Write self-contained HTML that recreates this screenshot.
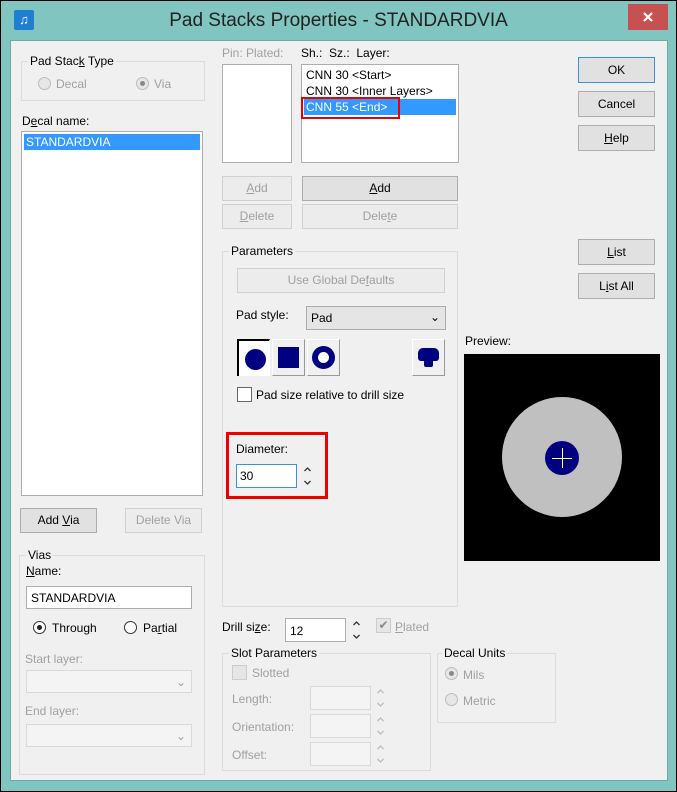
<!DOCTYPE html>
<html><head><style>
*{box-sizing:border-box;margin:0;padding:0}
body{width:677px;height:792px;background:#000;position:relative;overflow:hidden;font-family:"Liberation Sans",sans-serif;font-size:12px;color:#000}
.a{position:absolute}
.frame{left:1px;top:1px;width:675px;height:790px;background:#80c5bf}
.client{left:10px;top:40px;width:658px;height:741px;background:#f0f0f0;border:1px solid #6aa9a4}
.btn{position:absolute;background:#e1e1e1;border:1px solid #adadad;text-align:center;line-height:22px}
.dis{color:#a0a0a0;border-color:#d0d0d0;background:#ececec}
.grp{position:absolute;border:1px solid #dcdcdc}
.gl{position:absolute;background:#f0f0f0;padding:0 2px;top:-8px;left:6px}
.box{position:absolute;background:#fff;border:1px solid #abadb3}
.g{color:#a0a0a0}
.rad{position:absolute;width:13px;height:13px;border-radius:50%;border:1px solid #333;background:#fff}
.rad.d{border-color:#bcbcbc;background:#e6e6e6}
.dot{position:absolute;left:3px;top:3px;width:5px;height:5px;border-radius:50%;background:#222}
.cb{position:absolute;width:13px;height:13px;border:1px solid #333;background:#fff}
.sb{position:absolute;background:#f4f4f4;border:1px solid #d9d9d9}
.sp{position:absolute;width:9px;height:22px}
</style></head><body>
<svg width="0" height="0" style="position:absolute"><defs>
<symbol id="spin" viewBox="0 0 9 22"><path d="M1.5 6 L4.5 3 L7.5 6 M1.5 16 L4.5 19 L7.5 16" fill="none" stroke="currentColor" stroke-width="1.3"/></symbol>
</defs></svg>
<div class="a frame"></div>
<div class="a" style="left:14px;top:10px;width:20px;height:20px;background:#1e7fd0;border-radius:2px;color:#fff;font-size:13px;text-align:center;line-height:20px">♫</div>
<div class="a" style="left:0;width:677px;top:10px;text-align:center;font-size:19px;color:#222">Pad Stacks Properties - STANDARDVIA</div>
<div class="a" style="left:628px;top:4px;width:40px;height:26px;background:#c75050"><svg width="40" height="26"><path d="M16 9 L24 17 M24 9 L16 17" stroke="#fff" stroke-width="2.2"/></svg></div>
<div class="a client"></div>

<div class="grp" style="left:21px;top:61px;width:184px;height:40px"><span class="gl">Pad Stac<u>k</u> Type</span></div>
<div class="rad d" style="left:38px;top:77px"></div><span class="a g" style="left:56px;top:77px">Decal</span>
<div class="rad d" style="left:136px;top:77px"><div class="dot" style="background:#888"></div></div><span class="a g" style="left:154px;top:77px">Via</span>
<span class="a" style="left:22px;top:114px">D<u>e</u>cal name:</span>
<div class="box" style="left:21px;top:131px;width:182px;height:365px"><div style="margin:2px;background:#3399ff;color:#fff;height:16px;line-height:16px;padding-left:2px">STANDARDVIA</div></div>
<div class="btn" style="left:20px;top:508px;width:77px;height:25px">Add <u>V</u>ia</div>
<div class="btn dis" style="left:125px;top:508px;width:77px;height:25px">Delete Via</div>

<div class="grp" style="left:19px;top:555px;width:186px;height:220px"><span class="gl">Vias</span></div>
<span class="a" style="left:26px;top:564px"><u>N</u>ame:</span>
<div class="box" style="left:26px;top:586px;width:166px;height:23px;padding:4px">STANDARDVIA</div>
<div class="rad" style="left:33px;top:621px"><div class="dot"></div></div><span class="a" style="left:52px;top:621px">Throu<u>g</u>h</span>
<div class="rad" style="left:124px;top:621px"></div><span class="a" style="left:143px;top:621px">Pa<u>r</u>tial</span>
<span class="a g" style="left:25px;top:652px">Start layer:</span>
<div class="sb" style="left:26px;top:670px;width:166px;height:23px"><span class="a g" style="right:5px;top:4px">⌄</span></div>
<span class="a g" style="left:25px;top:704px">End layer:</span>
<div class="sb" style="left:26px;top:724px;width:166px;height:23px"><span class="a g" style="right:5px;top:4px">⌄</span></div>

<span class="a g" style="left:222px;top:46px">Pin: Plated:</span><span class="a" style="left:301px;top:46px">Sh.: &nbsp;Sz.: &nbsp;Layer:</span>
<div class="box" style="left:222px;top:64px;width:70px;height:99px"></div>
<div class="box" style="left:301px;top:64px;width:158px;height:99px;padding:2px 2px">
<div style="line-height:16px;padding-left:2px">CNN 30 &lt;Start&gt;</div>
<div style="line-height:16px;padding-left:2px">CNN 30 &lt;Inner Layers&gt;</div>
<div style="line-height:16px;padding-left:2px;background:#3399ff;color:#fff">CNN 55 &lt;End&gt;</div></div>
<div class="a" style="left:301px;top:97px;width:99px;height:22px;border:2px solid #e00"></div>
<div class="btn dis" style="left:222px;top:176px;width:70px;height:25px"><u>A</u>dd</div>
<div class="btn" style="left:302px;top:176px;width:156px;height:25px"><u>A</u>dd</div>
<div class="btn dis" style="left:222px;top:204px;width:70px;height:25px"><u>D</u>elete</div>
<div class="btn dis" style="left:302px;top:204px;width:156px;height:25px">Dele<u>t</u>e</div>

<div class="grp" style="left:222px;top:251px;width:236px;height:356px"><span class="gl">Parameters</span></div>
<div class="btn dis" style="left:237px;top:268px;width:208px;height:25px">Use Global De<u>f</u>aults</div>
<span class="a" style="left:236px;top:308px">Pad style:</span>
<div class="a" style="left:306px;top:306px;width:140px;height:24px;background:#e5e5e5;border:1px solid #acacac;padding:4px 4px">Pad<span style="position:absolute;right:5px;top:3px">⌄</span></div>
<div class="a" style="left:237px;top:339px;width:33px;height:37px;background:#fff;border-left:2px solid #000;border-top:2px solid #000;border-right:1px solid #fff"><div style="position:absolute;left:6px;top:8px;width:21px;height:21px;border-radius:50%;background:#000080"></div></div>
<div class="a" style="left:272px;top:339px;width:33px;height:37px;background:#f0f0f0;border:1px solid #fff;border-right-color:#999;border-bottom-color:#999"><div style="position:absolute;left:5px;top:7px;width:21px;height:21px;background:#000080"></div></div>
<div class="a" style="left:307px;top:339px;width:33px;height:37px;background:#f0f0f0;border:1px solid #fff;border-right-color:#999;border-bottom-color:#999"><div style="position:absolute;left:4px;top:6px;width:23px;height:23px;border-radius:50%;border:6px solid #000080;background:#fff"></div></div>
<div class="a" style="left:412px;top:339px;width:33px;height:37px;background:#f0f0f0;border:1px solid #fff;border-right-color:#999;border-bottom-color:#999"><div style="position:absolute;left:5px;top:8px;width:21px;height:13px;background:#000080;border-radius:5px 5px 3px 3px"></div><div style="position:absolute;left:11px;top:18px;width:9px;height:9px;background:#000080;border-radius:2px"></div></div>
<div class="cb" style="left:237px;top:387px;width:15px;height:15px;border-color:#666"></div><span class="a" style="left:256px;top:388px">Pad size relative to drill size</span>
<div class="a" style="left:226px;top:432px;width:102px;height:67px;border:3px solid #e00"></div>
<span class="a" style="left:236px;top:442px">Diameter:</span>
<div class="box" style="left:236px;top:464px;width:61px;height:24px;border-color:#3c8ee0;padding:4px 3px">30</div>
<svg class="sp" style="left:303px;top:465px;color:#333"><use href="#spin"/></svg>

<span class="a" style="left:222px;top:620px">Drill si<u>z</u>e:</span>
<div class="box" style="left:285px;top:618px;width:61px;height:24px;padding:5px 4px">12</div>
<svg class="sp" style="left:352px;top:619px;color:#333"><use href="#spin"/></svg>
<div class="cb" style="left:376px;top:618px;width:15px;height:15px;border-color:#ccc;background:#e6e6e6;color:#888;font-size:12px;line-height:13px;text-align:center">✔</div><span class="a g" style="left:395px;top:620px"><u>P</u>lated</span>

<div class="grp" style="left:222px;top:653px;width:209px;height:118px"><span class="gl" style="color:#000">Slot Parameters</span></div>
<div class="cb" style="left:232px;top:665px;width:15px;height:15px;border-color:#ccc;background:#e6e6e6"></div><span class="a g" style="left:252px;top:666px">Slotted</span>
<span class="a g" style="left:232px;top:692px">Length:</span><div class="sb" style="left:310px;top:686px;width:61px;height:24px"></div>
<span class="a g" style="left:232px;top:720px">Orientation:</span><div class="sb" style="left:310px;top:714px;width:61px;height:24px"></div>
<span class="a g" style="left:232px;top:748px">Offset:</span><div class="sb" style="left:310px;top:742px;width:61px;height:24px"></div>
<svg class="sp" style="left:376px;top:687px;color:#bbb"><use href="#spin"/></svg>
<svg class="sp" style="left:376px;top:715px;color:#bbb"><use href="#spin"/></svg>
<svg class="sp" style="left:376px;top:743px;color:#bbb"><use href="#spin"/></svg>

<div class="grp" style="left:437px;top:653px;width:119px;height:70px"><span class="gl" style="left:4px">Decal Units</span></div>
<div class="rad d" style="left:445px;top:667px"><div class="dot" style="background:#888"></div></div><span class="a g" style="left:463px;top:668px">Mils</span>
<div class="rad d" style="left:445px;top:693px"></div><span class="a g" style="left:463px;top:694px">Metric</span>

<div class="btn" style="left:578px;top:57px;width:77px;height:26px;border-color:#3c8ee0;line-height:24px">OK</div>
<div class="btn" style="left:578px;top:91px;width:77px;height:26px;line-height:24px">Cancel</div>
<div class="btn" style="left:578px;top:125px;width:77px;height:26px;line-height:24px"><u>H</u>elp</div>
<div class="btn" style="left:578px;top:239px;width:77px;height:26px;line-height:24px"><u>L</u>ist</div>
<div class="btn" style="left:578px;top:273px;width:77px;height:26px;line-height:24px">L<u>i</u>st All</div>
<span class="a" style="left:465px;top:334px">Preview:</span>
<div class="a" style="left:464px;top:354px;width:196px;height:207px;background:#000">
<div class="a" style="left:38px;top:43px;width:120px;height:120px;border-radius:50%;background:#c0c0c0"></div>
<div class="a" style="left:81px;top:87px;width:34px;height:34px;border-radius:50%;background:#000080"></div>
<div class="a" style="left:88px;top:104px;width:20px;height:1px;background:#fff"></div>
<div class="a" style="left:98px;top:94px;width:1px;height:20px;background:#fff"></div>
</div>
</body></html>
